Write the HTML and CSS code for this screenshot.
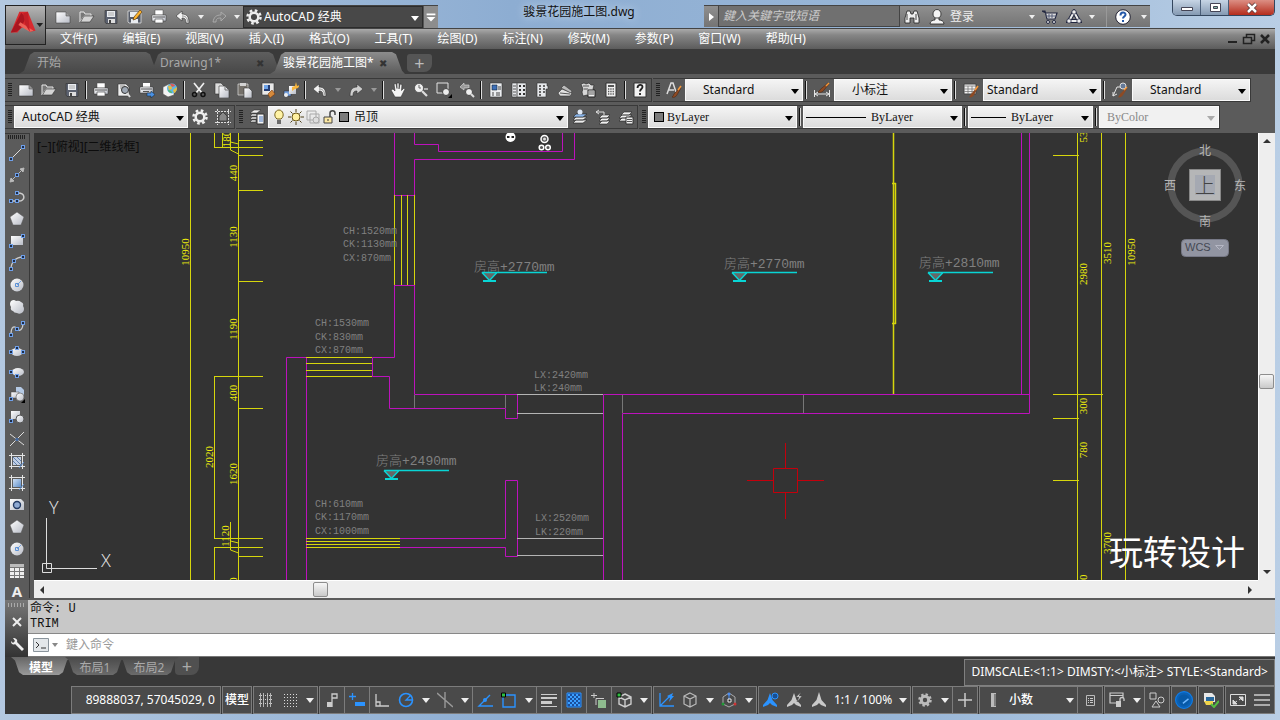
FILE: index.html
```html
<!DOCTYPE html>
<html lang="zh-CN">
<head>
<meta charset="utf-8">
<title>骏景花园施工图.dwg</title>
<link rel="stylesheet" href="styles.css">
</head>
<body>
<svg class="defs" aria-hidden="true">
  <defs>
    <linearGradient id="gw" x1="0" y1="0" x2="1" y2="1"><stop offset="0" stop-color="#fff"/><stop offset="1" stop-color="#b8bcc6"/></linearGradient>
    <linearGradient id="gb" x1="0" y1="0" x2="1" y2="1"><stop offset="0" stop-color="#cfe0f5"/><stop offset="1" stop-color="#5f8fcb"/></linearGradient>
    <g id="n"><rect x="-1.5" y="-1.5" width="3" height="3" fill="#1c2c48" stroke="#6f9fe8"/></g>
  </defs>
  <symbol id="new" viewBox="0 0 16 16"><path d="M1 3h10l4 4v7H1z" fill="url(#gw)" stroke="#333" stroke-width=".5"/><path d="M11 3v4h4" fill="#999" stroke="#555" stroke-width=".6"/></symbol>
  <symbol id="open" viewBox="0 0 16 16"><path d="M1 13V3h4l1 2h6v2H5z" fill="#777" stroke="#e8e8e8"/><path d="M1.500 13 5 7h10l-4 6z" fill="#d4d4d4" stroke="#333" stroke-width=".6"/></symbol>
  <symbol id="save" viewBox="0 0 16 16"><path d="M2 1.500h12v13H3L2 13z" fill="#5c6270" stroke="#333" stroke-width=".6"/><path d="M4 2h8v6H4z" fill="#e9ecf0"/><path d="M5 4h6M5 6h6" stroke="#aaa"/><path d="M5 10h7v4H5z" fill="#ddd"/><path d="M6 11h2v3H6z" fill="#444"/></symbol>
  <symbol id="saveas" viewBox="0 0 16 16"><path d="M1 2h13v12H2L1 13z" fill="#555b68" stroke="#eee" stroke-width=".7"/><path d="M3 3h8v5H3zM4 10h7v4H4z" fill="#e9ecf0"/><path d="m6 11 1-3 6-7 2 2-6 7z" fill="#ffb52e" stroke="#5d3c10" stroke-width=".7"/></symbol>
  <symbol id="print" viewBox="0 0 16 16"><path d="M4 1h8v5H4z" fill="#fff" stroke="#444" stroke-width=".5"/><path d="M1 6h14v6H1z" fill="url(#gw)" stroke="#333" stroke-width=".5"/><path d="M2 8h12" stroke="#555"/><path d="M4 10h8v4H4z" fill="#fff" stroke="#555" stroke-width=".7"/></symbol>
  <symbol id="preview" viewBox="0 0 16 16"><path d="M2 2h8l3 3v9H2z" fill="#eee" stroke="#333" stroke-width=".6"/><path d="M4 4h5M4 6h3" stroke="#888"/><circle cx="9" cy="8" r="3.500" fill="#9da6b2" stroke="#333"/><path d="m11 11 3 4" stroke="#ddd" stroke-width="2"/></symbol>
  <symbol id="publish" viewBox="0 0 16 16"><path d="M4 1h7v4H4z" fill="#fff"/><path d="M1 5h13v6H1z" fill="url(#gw)" stroke="#333" stroke-width=".5"/><path d="M2 7h11M4 9.500h6" stroke="#555"/><path d="M8 11h4V9l4 3.500-4 3.500v-2H8z" fill="#4a90e2" stroke="#123" stroke-width=".5"/></symbol>
  <symbol id="globe" viewBox="0 0 16 16"><path d="m1 5 6-3 5 3v8l-6 2-5-3z" fill="#f3f3f3" stroke="#555" stroke-width=".6"/><circle cx="10" cy="6.500" r="5" fill="#5db6e7"/><path d="M6 4c3-1 4 0 4 3l-3 1zM11 8l4-3c0 4-2 6-3 6z" fill="#e8bc3d"/><path d="M8 2c3-1 5 1 5 2l-3 1z" fill="#dd5b57"/><path d="M6 8c2 0 4 1 4 3-2 0-4-1-4-3z" fill="#57b86a"/></symbol>
  <symbol id="cut" viewBox="0 0 16 16"><path d="m3 1 8 10M13 1 5 11" stroke="#eee" stroke-width="1.700"/><circle cx="3.500" cy="12.500" r="2" fill="none" stroke="#111" stroke-width="1.500"/><circle cx="12" cy="12.500" r="2" fill="none" stroke="#111" stroke-width="1.500"/></symbol>
  <symbol id="copy" viewBox="0 0 16 16"><path d="M1 1h6l3 3v8H1z" fill="#ddd" stroke="#333" stroke-width=".6"/><path d="M5 4h6l4 4v8H5z" fill="url(#gw)" stroke="#333" stroke-width=".6"/><path d="M11 4v4h4" fill="none" stroke="#777"/></symbol>
  <symbol id="paste" viewBox="0 0 16 16"><path d="M1 2h10v11H1z" fill="#74706a" stroke="#ddd" stroke-width=".7"/><path d="M3 1h6v3H3z" fill="#d3d3d3"/><path d="M7 6h5l3 3v7H7z" fill="url(#gw)" stroke="#333" stroke-width=".6"/></symbol>
  <symbol id="match" viewBox="0 0 16 16"><path d="M2 1h12v12H2z" fill="#e9e9e9" stroke="#333" stroke-width=".6"/><path d="M4 3h6v6H4z" fill="#253d73"/><path d="M4 3h4v4H4z" fill="#6ea3e8"/><path d="m8 12 4-4 3 4-5 4z" fill="#d58a3c" stroke="#7b3b11" stroke-width=".6"/></symbol>
  <symbol id="block" viewBox="0 0 16 16"><path d="M1 9h7v5H1z" fill="#76a1dd" stroke="#223" stroke-width=".5"/><path d="M6 4h7v8H6z" fill="url(#gw)"/><circle cx="3" cy="13" r="2" fill="#eee"/><path d="m9 5 3-1 1-4 1 4 3-1-2 3-3 1-3 2z" fill="#f7b53c"/></symbol>
  <symbol id="undo" viewBox="0 0 16 16"><path d="M1 7 7 2v3c5 0 7 3 7 9h-3c0-4-1-5-4-5v3z" fill="#f2f2f2" stroke="#333" stroke-width=".6"/><path d="M7 7c4 0 5 2 6 6" fill="none" stroke="#888"/></symbol>
  <symbol id="redo" viewBox="0 0 16 16"><path d="M15 7 9 2v3C4 5 2 8 2 14h3c0-4 1-5 4-5v3z" fill="#cfcfcf" stroke="#333" stroke-width=".6"/></symbol>
  <symbol id="redo-off" viewBox="0 0 16 16"><path d="M15 7 10 3v3C5 6 3 8 2 13h3c0-3 1-4 5-4v3z" fill="none" stroke="#aaa"/></symbol>
  <symbol id="hand" viewBox="0 0 16 16"><path d="M5 15 1 8l2-1 2 2-1-7 2-.500 1 5V1h2v6l1-5 2 .500-.500 6L14 6l1 1-4 8z" fill="#f4f4f4" stroke="#333" stroke-width=".6"/></symbol>
  <symbol id="zoomrt" viewBox="0 0 16 16"><circle cx="6" cy="6" r="4.500" fill="#f0f0f0" stroke="#333" stroke-width=".6"/><path d="M6 3v3h2" stroke="#666" fill="none"/><path d="m9 9 5 5" stroke="#ddd" stroke-width="2.200"/><path d="M11 7h4" stroke="#fff"/></symbol>
  <symbol id="zoomwin" viewBox="0 0 16 16"><path d="M1 1h11v10H1z" fill="none" stroke="#e4e4e4"/><circle cx="10" cy="10" r="3.500" fill="#eee" stroke="#444"/><path d="M16 12v4h-4z" fill="#000"/></symbol>
  <symbol id="zoomprev" viewBox="0 0 16 16"><path d="m1 5 4-4v2h5v3H5v2z" fill="#999" stroke="#ddd" stroke-width=".6"/><circle cx="10" cy="10" r="3.500" fill="#f0f0f0" stroke="#444"/><path d="m12 12 3 3" stroke="#ddd" stroke-width="2"/></symbol>
  <symbol id="props" viewBox="0 0 16 16"><path d="M2 1h12v14H2z" fill="#eceef1" stroke="#333" stroke-width=".6"/><path d="M4 3h5v5H4z" fill="#3d6fb8" stroke="#123" stroke-width=".6"/><path d="M10 5h3M10 7h3M4 11h2M8 11h4M4 13h2M8 13h4" stroke="#444"/></symbol>
  <symbol id="dcenter" viewBox="0 0 16 16"><path d="M1 1h14v14H1z" fill="#e6e8eb" stroke="#333" stroke-width=".6"/><path d="M2 4h3M2 7h3M2 10h3M2 13h3M6 1v14" stroke="#555"/><path d="M8 3h2v2H8zM12 3h2v2h-2zM8 7h2v2H8zM12 7h2v2h-2zM8 11h2v2H8zM12 11h2v2h-2z" fill="#333"/></symbol>
  <symbol id="palette" viewBox="0 0 16 16"><path d="M3 1h10v3h1v3h-2v8H3z" fill="#e6e8eb" stroke="#333" stroke-width=".6"/><path d="M5 3h2v2H5zM5 6h2v2H5zM5 9h2v2H5zM5 12h2v2H5zM9 3h2v2H9zM9 6h2v2H9zM9 9h2v2H9z" fill="#666"/></symbol>
  <symbol id="sheet" viewBox="0 0 16 16"><path d="m1 11 4-4 10 4-2 3H3z" fill="#e1e1e1" stroke="#333" stroke-width=".6"/><path d="m4 6 3-3 8 6-1 2z" fill="#bbb" stroke="#333" stroke-width=".6"/><path d="m3 11 10 1" stroke="#555"/></symbol>
  <symbol id="markup" viewBox="0 0 16 16"><path d="M1 2 4 1l2 1 3-1 2 2 3 0-1 4 1 4-4 3-3-1-4 1-1-4 1-3z" fill="#d7d7d7" stroke="#222" stroke-width=".6"/><path d="M3 4h6M4 7h4" stroke="#555"/><path d="M8 8h7v7H8z" fill="#f2f2f2" stroke="#222"/><path d="M9 10h5M9 12h5" stroke="#555"/></symbol>
  <symbol id="calc" viewBox="0 0 16 16"><path d="M3 1h10v14H3z" fill="#f0f0f0" stroke="#333"/><path d="M5 3h6v2H5z" fill="#555"/><path d="M5 7h6M5 9.500h6M5 12h6" stroke="#555" stroke-width="1.500" stroke-dasharray="1.300 1"/></symbol>
  <symbol id="help" viewBox="0 0 16 16"><path d="M2 1h12v14H2z" fill="#f3f3f3" stroke="#333"/><path d="M5.500 6c0-4 5-4 5-1 0 2-2.500 2-2.500 4.500M8 11v2" fill="none" stroke="#222" stroke-width="1.800"/></symbol>
  <symbol id="tstyle" viewBox="0 0 16 16"><path d="m1 12 4-11h2l3 9M3 8h5" fill="none" stroke="#ddd" stroke-width="1.500"/><path d="m9 11 5-6 1 1-4 7c-1 2-4 3-5 2 2-1 1-3 3-4z" fill="#8d4a24" stroke="#44220f" stroke-width=".5"/><path d="m12 8 3-4" stroke="#f49a3c" stroke-width="1.500"/></symbol>
  <symbol id="dstyle" viewBox="0 0 16 16"><path d="M.500 8v7M15.500 8v7M1 12h14M1 12l3-2M1 12l3 2M15 12l-3-2M15 12l-3 2" fill="none" stroke="#e4e4e4"/><path d="m8 6 6-5 1 1-5 6c-1 2-4 3-6 2 2-1 2-3 4-4z" fill="#8d4a24" stroke="#44220f" stroke-width=".5"/><path d="m12 4 3-3" stroke="#f49a3c" stroke-width="1.500"/></symbol>
  <symbol id="tabstyle" viewBox="0 0 16 16"><path d="M1 2h12v10H1z" fill="#f4f4f4" stroke="#444"/><path d="M1 4h12M1 7h12M1 9.500h12M5 4v8M9 4v8" stroke="#777" stroke-width=".8"/><path d="m9 11 5-6 1 1-4 7c-1 2-4 3-5 2 2-1 1-3 3-4z" fill="#8d4a24"/><path d="m12 8 3-4" stroke="#f49a3c" stroke-width="1.500"/></symbol>
  <symbol id="mlstyle" viewBox="0 0 16 16"><path d="M1 14 5 5h4M1 14v-4M1 14l4-2" fill="none" stroke="#e4e4e4"/><circle cx="11" cy="4" r="3" fill="#657a98" stroke="#ddd"/><path d="m9 11 5-5 1 1-4 6c-1 2-4 3-5 2 2-1 1-3 3-4z" fill="#8d4a24"/><path d="m12 8 3-3" stroke="#f49a3c" stroke-width="1.500"/></symbol>
  <symbol id="gear" viewBox="0 0 16 16"><circle cx="8" cy="8" r="6.500" fill="none" stroke="#eee" stroke-width="2.500" stroke-dasharray="2.600 2.500"/><circle cx="8" cy="8" r="4.300" fill="none" stroke="#eee" stroke-width="2.500"/></symbol>
  <symbol id="wspace" viewBox="0 0 16 16"><path d="M2.500 0v16M13.500 0v16M0 2.500h16M0 13.500h16" stroke="#ddd" stroke-dasharray="2 1"/><path d="M4 12V7l4-4 4 4v5z" fill="#888" stroke="#222" stroke-width=".6"/></symbol>
  <symbol id="laymgr" viewBox="0 0 16 16"><path d="m1 4 4-3h7L8 4zM1 7l2-2h5v2zM1 10l2-2h5v2zM1 13l2-2h4v2z" fill="#eee" stroke="#222" stroke-width=".5"/><path d="M8 5h7v10H8z" fill="#f5f5f5" stroke="#333"/><path d="M10 8h4M10 10h4M10 12h4" stroke="#4a74b8"/></symbol>
  <symbol id="lay1" viewBox="0 0 16 16"><path d="m1 14 3-3h11l-4 3zM1 11l3-3h11l-4 3z" fill="#eee" stroke="#222" stroke-width=".6"/><path d="m1 8 3-3h11l-4 3z" fill="#8bb6ea" stroke="#222" stroke-width=".6"/><circle cx="8" cy="3" r="2.500" fill="#dfe8f5"/></symbol>
  <symbol id="lay2" viewBox="0 0 16 16"><path d="m4 15 3-3h8l-3 3zM4 12l3-3h8l-3 3zM4 9l3-3h8l-3 3z" fill="#f0f0f0" stroke="#222" stroke-width=".6"/><path d="M1 3h8v3M1 3l3-2M1 3l3 2" fill="none" stroke="#ddd"/></symbol>
  <symbol id="lay3" viewBox="0 0 16 16"><path d="m1 12 3-3h10l-4 3zM1 9l3-3h10l-4 3zM3 6l3-3h8l-3 3z" fill="#f0f0f0" stroke="#222" stroke-width=".6"/><path d="M8 8h7v7H8z" fill="#eee" stroke="#333"/><path d="M9 10.500h5M9 12.500h5" stroke="#555"/></symbol>
  <symbol id="bulb" viewBox="0 0 16 16"><path d="M6 10C2 7 4 1 8 1s6 6 2 9z" fill="#fff3a6" stroke="#77621b"/><path d="M6 12h4M6 14h4" stroke="#444" stroke-width="1.500"/></symbol>
  <symbol id="sun" viewBox="0 0 16 16"><circle cx="8" cy="8" r="4" fill="#fff0a0" stroke="#6a5514"/><path d="M8 0v3M8 13v3M0 8h3M13 8h3M2.500 2.500l2 2M11.500 11.500l2 2M13.500 2.500l-2 2M4.500 11.500l-2 2" stroke="#4c3f18"/></symbol>
  <symbol id="vpf" viewBox="0 0 16 16"><path d="M2 2h9v9H2zM5 5h9v9H5z" fill="none" stroke="#aaa"/><circle cx="11" cy="11" r="3" fill="#ddd" stroke="#aaa"/></symbol>
  <symbol id="lock" viewBox="0 0 16 16"><path d="M8 8V4c0-3 5-3 5 0v2" fill="none" stroke="#444" stroke-width="1.500"/><path d="M2 8h8v6H2z" fill="#fce8a4" stroke="#444"/><path d="M6 10v2" stroke="#333"/></symbol>

  <symbol id="line" viewBox="0 0 16 16"><path d="M2 14 14 2" stroke="#ddd"/><use href="#n" x="2" y="14"/><use href="#n" x="14" y="2"/></symbol>
  <symbol id="xline" viewBox="0 0 16 16"><path d="M3 13 13 3M15 1l-1 4-3-3zM1 15l1-4 3 3z" stroke="#bbb" fill="#bbb"/><use href="#n" x="8" y="8"/></symbol>
  <symbol id="pline" viewBox="0 0 16 16"><path d="M8 4c9-1 9 9 1 8H2" fill="none" stroke="#ccc" stroke-width="1.500"/><use href="#n" x="8" y="4"/><use href="#n" x="8" y="12"/><use href="#n" x="2" y="12"/></symbol>
  <symbol id="poly" viewBox="0 0 16 16"><path d="m8 1 7 5-3 8H4L1 6z" fill="url(#gw)" stroke="#555" stroke-width=".5"/></symbol>
  <symbol id="rect" viewBox="0 0 16 16"><path d="M2 3h12v9H2z" fill="url(#gw)"/><use href="#n" x="2" y="13"/><use href="#n" x="14" y="3"/></symbol>
  <symbol id="arc" viewBox="0 0 16 16"><path d="M2 14C2 7 7 2 14 2" fill="none" stroke="#ccc" stroke-width="1.300"/><use href="#n" x="2" y="14"/><use href="#n" x="5" y="6"/><use href="#n" x="14" y="2"/></symbol>
  <symbol id="circ" viewBox="0 0 16 16"><circle cx="8" cy="8" r="6.500" fill="url(#gw)"/><path d="m8 8 4-4" stroke="#79a3de"/><path d="M6.500 6.500h3v3h-3z" fill="none" stroke="#5e92d5"/></symbol>
  <symbol id="cloud" viewBox="0 0 16 16"><path d="M2 2q3-2 5 0 3-1 5 1 3 1 2 4 2 3 0 6-3 3-6 1-3 0-4-2-3-1-2-4-2-3 0-6z" fill="url(#gw)"/></symbol>
  <symbol id="spline" viewBox="0 0 16 16"><path d="M2 14C2 4 6 5 8 8s6 1 6-6" fill="none" stroke="#ccc" stroke-width="1.300"/><use href="#n" x="2" y="14"/><use href="#n" x="8" y="8"/><use href="#n" x="14" y="2"/></symbol>
  <symbol id="ell" viewBox="0 0 16 16"><ellipse cx="8" cy="9" rx="6" ry="4" fill="url(#gw)"/><use href="#n" x="2" y="9"/><use href="#n" x="8" y="5"/><use href="#n" x="14" y="9"/></symbol>
  <symbol id="ellarc" viewBox="0 0 16 16"><ellipse cx="9" cy="7" rx="6" ry="4" fill="url(#gw)"/><use href="#n" x="2" y="7"/><use href="#n" x="8" y="11"/></symbol>
  <symbol id="insblk" viewBox="0 0 16 16"><path d="M7 0h5l3 3v6H7z" fill="#b5cae5"/><path d="M2 5h8v6H2z" fill="url(#gw)" stroke="#444" stroke-width=".5"/><circle cx="11" cy="10" r="4" fill="url(#gw)" stroke="#555" stroke-width=".6"/><use href="#n" x="2" y="12"/><path d="M16 12v4h-4z" fill="#000"/></symbol>
  <symbol id="mkblk" viewBox="0 0 16 16"><path d="M2 2h9v8H2z" fill="url(#gw)"/><circle cx="11" cy="10" r="4" fill="url(#gw)" stroke="#555"/><use href="#n" x="2" y="12"/></symbol>
  <symbol id="point" viewBox="0 0 16 16"><path d="M1 15 15 1M1 3l14 11" stroke="#ddd"/><path d="M6.500 7h3v3h-3z" fill="#46699c"/></symbol>
  <symbol id="hatch" viewBox="0 0 16 16"><path d="M2.500 0v16M13.500 0v16M0 2.500h16M0 13.500h16" stroke="#e4e4e4"/><path d="M4 4h8v8H4z" fill="#c0cee3"/><path d="m4 4 8 8M8 4l4 4M4 8l4 4" stroke="#607fae"/><path d="M10 15 15 9" stroke="#5e92d5"/></symbol>
  <symbol id="grad" viewBox="0 0 16 16"><path d="M2.500 0v16M13.500 0v16M0 2.500h16M0 13.500h16" stroke="#e4e4e4"/><path d="M4 4h8v8H4z" fill="url(#gb)"/><path d="M10 15 15 9" stroke="#5e92d5"/></symbol>
  <symbol id="region" viewBox="0 0 16 16"><path d="M1 2h11l3 3v8H1z" fill="url(#gw)"/><circle cx="8" cy="8" r="3.500" fill="#8faad3" stroke="#243b63" stroke-width="1.400"/></symbol>
  <symbol id="table" viewBox="0 0 16 16"><path d="M1 1h14v14H1z" fill="#eee"/><path d="M1 4.500h14M1 8.500h14M1 12.500h14M5.500 4v11M10.500 4v11" stroke="#777"/><path d="M1 1h14v3H1z" fill="#bbb"/></symbol>

  <symbol id="bino" viewBox="0 0 16 16"><path d="m1 9 2-7h3l1 3h2l1-3h3l2 7v5h-5V9H6v5H1z" fill="#eee" stroke="#222" stroke-width=".8"/><path d="M3 5v6M12 5v6" stroke="#444"/></symbol>
  <symbol id="person" viewBox="0 0 16 16"><ellipse cx="8" cy="5" rx="4" ry="4.500" fill="#f4f4f4" stroke="#222" stroke-width=".8"/><path d="M1 15c0-3 3-4 5-4V9h4v2c2 0 5 1 5 4z" fill="#f4f4f4" stroke="#222" stroke-width=".8"/></symbol>
  <symbol id="cart" viewBox="0 0 16 16"><path d="M0 2h3l2 8h8l2-6H4z" fill="#ddd" stroke="#222740" stroke-width="1.200"/><path d="M7 5v4M10 5v4M4 7h10" stroke="#555c78"/><circle cx="6" cy="13" r="1.500" fill="#eee" stroke="#222740"/><circle cx="12" cy="13" r="1.500" fill="#eee" stroke="#222740"/></symbol>
  <symbol id="a360" viewBox="0 0 16 16"><g stroke="#222740" stroke-width="4" fill="#222740"><path d="M8 3 3 12h10z" fill="none"/></g><path d="M8 3 3 12h10z" fill="none" stroke="#eee" stroke-width="2"/><g fill="#eee" stroke="#222740" stroke-width=".8"><circle cx="8" cy="3" r="2.200"/><circle cx="3" cy="12" r="2.200"/><circle cx="13" cy="12" r="2.200"/></g></symbol>
  <symbol id="q" viewBox="0 0 16 16"><circle cx="8" cy="8" r="7.300" fill="#fff" stroke="#223" /><path d="M5.500 6.500c0-4 5-3.500 5-1 0 2-2.500 2-2.500 4M8 11v2" fill="none" stroke="#2458a8" stroke-width="2"/></symbol>
  <symbol id="wrench" viewBox="0 0 16 16"><path d="M2 4c0 4 3 4 4 3l7 7 2-2-7-7c1-2-1-4-4-4l2 3-2 2z" fill="#eee"/></symbol>

  <symbol id="s-grid" viewBox="0 0 16 16"><path d="M2.500 1v14M5.500 1v14M9.500 1v14M12.500 1v14" stroke="#b5b5b5"/><path d="M1 3.500h14M1 7.500h14M1 11.500h14" stroke="#ccc" stroke-dasharray="1 1"/></symbol>
  <symbol id="s-dots" viewBox="0 0 16 16"><path d="M2 2.500h13M2 5.500h13M2 8.500h13M2 11.500h13M2 14.500h13" stroke="#ddd" stroke-dasharray="1 2"/></symbol>
  <symbol id="s-infer" viewBox="0 0 16 16"><path d="M8 15V2h5v4H8" fill="none" stroke="#ccc" stroke-width="1.300"/><path d="M3 10h5v5H3z" fill="#ccc"/></symbol>
  <symbol id="s-dyn" viewBox="0 0 16 16"><path d="M3.500 1v7M0 4.500h7" stroke="#2b93ff" stroke-width="1.300"/><path d="M6 10h10v4H6z" fill="#2b93ff"/></symbol>
  <symbol id="s-ortho" viewBox="0 0 16 16"><path d="M2 2v12h13M2 10h4v4" fill="none" stroke="#ccc" stroke-width="1.300"/></symbol>
  <symbol id="s-polar" viewBox="0 0 16 16"><circle cx="8" cy="8" r="6.500" fill="none" stroke="#2b93ff" stroke-width="1.600"/><path d="M15 8H8l5-5" fill="none" stroke="#2b93ff" stroke-width="1.300"/></symbol>
  <symbol id="s-iso" viewBox="0 0 16 16"><path d="M0 1l16 14M8 0v16" stroke="#999" stroke-width="1.400"/></symbol>
  <symbol id="s-track" viewBox="0 0 16 16"><path d="M13 3 2 14h14" fill="none" stroke="#2b93ff" stroke-width="1.400"/><circle cx="8" cy="8" r="2" fill="#2b93ff"/></symbol>
  <symbol id="s-snap" viewBox="0 0 16 16"><path d="M2 3h12v12H2z" fill="none" stroke="#2b93ff" stroke-width="1.400"/><path d="M.500 1h4v4h-4z" fill="#2fbf40" stroke="#000"/></symbol>
  <symbol id="s-lw" viewBox="0 0 16 16"><path d="M0 2.500h16" stroke="#ccc"/><path d="M0 6h16" stroke="#ccc" stroke-width="2"/><path d="M0 10.500h11" stroke="#ccc" stroke-width="3"/><path d="M0 14.500h16" stroke="#ccc"/></symbol>
  <symbol id="s-tr" viewBox="0 0 16 16"><path d="M1 1h14v14H1z" fill="#1b4f9c" stroke="#2b93ff"/><path d="M2 3h12M2 7h12M2 11h12" stroke="#3ba0ff" stroke-width="2" stroke-dasharray="2 2"/><path d="M4 5h10M4 9h10M4 13h10" stroke="#3ba0ff" stroke-width="2" stroke-dasharray="2 2"/></symbol>
  <symbol id="s-cyc" viewBox="0 0 16 16"><path d="M3 1v5M0 3.500h6M5 13V6.500h8" stroke="#ccc" fill="none"/><path d="M7 8h8v8H7z" fill="#8fbc8f"/></symbol>
  <symbol id="s-cube" viewBox="0 0 16 16"><path d="m8 1 6 3v8l-6 3-6-3V4zM2 4l6 3 6-3M8 7v8" fill="none" stroke="#bbb" stroke-width="1.200"/></symbol>
  <symbol id="s-cubeg" viewBox="0 0 16 16"><path d="m9 2 6 3v7l-6 3-6-3V5zM3 5l6 3 6-3M9 8v7" fill="none" stroke="#ccc" stroke-width="1.400"/><path d="M1 1h4v4H1z" fill="#2fbf40" stroke="#000"/></symbol>
  <symbol id="s-ucs" viewBox="0 0 16 16"><path d="M2 1v13h14M2 14 12 4" fill="none" stroke="#2b93ff" stroke-width="1.300"/><path d="m9 4 6-3-1 3h2l-5 6 1-4z" fill="#2b93ff"/></symbol>
  <symbol id="s-giz" viewBox="0 0 16 16"><path d="m8 1 6 4v7l-6 3-6-3V5z" fill="none" stroke="#aaa"/><path d="M8 2v6" stroke="#4b8df0"/><circle cx="8" cy="2" r="1.500" fill="#4b8df0"/><circle cx="2" cy="12" r="1.500" fill="#1f9a35"/><circle cx="14" cy="12" r="1.500" fill="#cf3434"/><path d="M7 7h3v3H7z" fill="#222" stroke="#eee"/></symbol>
  <symbol id="s-ann" viewBox="0 0 16 16"><path d="M8 0l2.500 8 4.500 5v2l-5-2-2-2-2 2-5 2v-2l4.500-5z" fill="#c9c9c9"/></symbol>
  <symbol id="s-annb" viewBox="0 0 16 16"><path d="M7 1l2.500 7 4.500 5v2l-5-2-2-2-2 2-5 2v-2l4.500-5z" fill="#2b93ff"/><circle cx="12" cy="4" r="3" fill="#174f93" stroke="#2b93ff"/></symbol>
  <symbol id="s-anna" viewBox="0 0 16 16"><path d="M7 1l2.500 7 4.500 5v2l-5-2-2-2-2 2-5 2v-2l4.500-5z" fill="#c9c9c9"/><path d="m14 0-5 5h3l-2 5 5-6h-3z" fill="#ddd" stroke="#444" stroke-width=".5"/></symbol>
  <symbol id="s-gear" viewBox="0 0 16 16"><circle cx="8" cy="8" r="5.500" fill="none" stroke="#bbb" stroke-width="2.500" stroke-dasharray="2.300 2"/><circle cx="8" cy="8" r="3.700" fill="none" stroke="#bbb" stroke-width="3"/></symbol>
  <symbol id="s-plus" viewBox="0 0 16 16"><path d="M8 1v14M1 8h14" stroke="#ccc" stroke-width="1.500"/></symbol>
  <symbol id="s-unit" viewBox="0 0 16 16"><path d="M6 1h5v14H6z" fill="#bbb"/><path d="M9 3h2M9 5h2M9 7h2M9 9h2M9 11h2M9 13h2" stroke="#444"/></symbol>
  <symbol id="s-qp" viewBox="0 0 16 16"><path d="M4.500 3.500h8v10h-8z" fill="none" stroke="#bbb"/><path d="M6 6.500h1M8 6.500h3M6 8.500h1M8 8.500h3M6 10.500h1M8 10.500h3" stroke="#ccc"/></symbol>
  <symbol id="s-lock" viewBox="0 0 16 16"><path d="M7 11H1V1h13v4M1 3.500h13" fill="none" stroke="#ccc" stroke-width="1.200"/><path d="M7 9h5v6H7z" fill="#ccc"/><path d="M11 9V7c0-2 4-2 4 0v2" fill="none" stroke="#ccc" stroke-width="1.300"/></symbol>
  <symbol id="s-isol" viewBox="0 0 16 16"><path d="M1 1h6v6H1zM7 9l4 6H3z" fill="none" stroke="#ccc"/><circle cx="12" cy="8" r="3" fill="none" stroke="#ccc"/></symbol>
  <symbol id="s-hw" viewBox="0 0 16 16"><circle cx="8" cy="8" r="7.500" fill="#0b61b5" stroke="#0f7de8"/><circle cx="8" cy="8" r="5" fill="#0759a7"/><path d="m7 11 5-4" stroke="#6fb8ff" stroke-width="1.300"/></symbol>
  <symbol id="s-py" viewBox="0 0 16 16"><path d="M1 1h8l3 3v6H1z" fill="#e7e7e7"/><path d="M3 5h8v4H3z" fill="#28689d"/><path d="M1 9h9v4H3z" fill="#efd34b"/><path d="m8 12 3 3 5-6" fill="none" stroke="#54bd42" stroke-width="2"/></symbol>
  <symbol id="s-full" viewBox="0 0 16 16"><path d="M.500 2.500h15v11H.500z" fill="none" stroke="#ddd"/><path d="M9 5h4v4zM3 8v4h4zM13 5 9 8M3 12l4-3" fill="#ddd" stroke="#ddd"/></symbol>
  <symbol id="s-menu" viewBox="0 0 16 16"><path d="M0 3h16M0 8h16M0 13h16" stroke="#ccc" stroke-width="1.500"/></symbol>
</svg>

<div class="window">
  <header class="titlebar">
    <button class="logo" aria-label="应用程序菜单">
      <svg viewBox="0 0 40 40"><path d="m4 28 9-22h9l8 20-6 1-3-7-7 4-3 4z" fill="#d92a2e"/><path d="m4 28 11-21 5 5-6 12-4 3z" fill="#a91620"/><path d="m14 17 14 9-4 1-12-7z" fill="#ee6258"/><path d="m17 8 5-2 2 21-5-8z" fill="#c22027"/><path d="M31 18h7l-3.500 4z" fill="#222"/></svg>
    </button>
    <div class="quick">
      <button class="q-btn" aria-label="新建"><svg><use href="#new"/></svg></button>
      <button class="q-btn" aria-label="打开"><svg><use href="#open"/></svg></button>
      <button class="q-btn" aria-label="保存"><svg><use href="#save"/></svg></button>
      <button class="q-btn" aria-label="另存为"><svg><use href="#saveas"/></svg></button>
      <button class="q-btn" aria-label="打印"><svg><use href="#print"/></svg></button>
      <button class="q-btn" aria-label="放弃"><svg><use href="#undo"/></svg></button>
      <button class="drop" aria-label="放弃列表"></button>
      <button class="q-btn" aria-label="重做"><svg><use href="#redo-off"/></svg></button>
      <button class="drop" aria-label="重做列表"></button>
      <div class="combo combo-dark"><span class="over"><svg class="ic"><use href="#gear"/></svg></span><select aria-label="工作空间"><option>AutoCAD 经典</option></select></div>
      <button class="custom" aria-label="自定义快速访问工具栏"><svg viewBox="0 0 16 16"><path d="M3 4h10v2H3zM3 8h10l-5 5z" fill="#fff"/></svg></button>
    </div>
    <h1 class="title">骏景花园施工图.dwg</h1>
    <div class="info">
      <button class="expand" aria-label="展开"></button>
      <input class="search" type="text" aria-label="搜索" placeholder="鍵入关鍵字或短语">
      <button class="q-btn" aria-label="查找"><svg><use href="#bino"/></svg></button>
      <button class="login"><svg><use href="#person"/></svg>登录</button>
      <button class="drop" aria-label="登录选项"></button>
      <button class="q-btn" aria-label="商店"><svg><use href="#cart"/></svg></button>
      <button class="q-btn" aria-label="A360"><svg><use href="#a360"/></svg></button>
      <button class="drop" aria-label="A360 选项"></button>
      <button class="q-btn help" aria-label="帮助"><svg><use href="#q"/></svg></button>
      <button class="drop" aria-label="帮助选项"></button>
    </div>
    <div class="winbtns">
      <button aria-label="最小化"><svg viewBox="0 0 16 12"><path d="M2.500 5.500h11v3h-11z" fill="#fff" stroke="#445"/></svg></button>
      <button aria-label="最大化"><svg viewBox="0 0 16 12"><path d="M3.500 1.500h10v8h-10z" fill="#fff" stroke="#445"/><path d="M6.500 4.500h4v2h-4z" fill="#8ba" stroke="#445"/></svg></button>
      <button class="close" aria-label="关闭"><svg viewBox="0 0 16 12"><path d="m4 2 8 8M12 2l-8 8" stroke="#533" stroke-width="4"/><path d="m4 2 8 8M12 2l-8 8" stroke="#fff" stroke-width="2.500"/></svg></button>
    </div>
  </header>

  <nav class="menubar">
    <button>文件(F)</button><button>编辑(E)</button><button>视图(V)</button><button>插入(I)</button><button>格式(O)</button><button>工具(T)</button><button>绘图(D)</button><button>标注(N)</button><button>修改(M)</button><button>参数(P)</button><button>窗口(W)</button><button>帮助(H)</button>
    <span class="docbtns">
      <button aria-label="最小化图形"><svg viewBox="0 0 14 14"><path d="M2 10h9" stroke="#222" stroke-width="2"/></svg></button>
      <button aria-label="还原图形"><svg viewBox="0 0 14 14"><path d="M1.500 5.500h8v6h-8zM4.500 5V2.500h8v6H10" fill="none" stroke="#222" stroke-width="1.500"/></svg></button>
      <button aria-label="关闭图形"><svg viewBox="0 0 14 14"><path d="m3 3 8 8M11 3l-8 8" stroke="#222" stroke-width="2.500"/></svg></button>
    </span>
  </nav>

  <nav class="filetabs">
    <div class="ftab"><button class="name">开始</button></div>
    <div class="ftab"><button class="name">Drawing1*</button><button class="x" aria-label="关闭 Drawing1">✖</button></div>
    <div class="ftab on"><button class="name">骏景花园施工图*</button><button class="x" aria-label="关闭 骏景花园施工图">✖</button></div>
    <button class="addtab" aria-label="新图形">+</button>
  </nav>

  <div class="bars">
    <div class="row">
      <div class="bar">
        <i class="grip"></i>
        <button aria-label="新建"><svg><use href="#new"/></svg></button><button aria-label="打开"><svg><use href="#open"/></svg></button><button aria-label="保存"><svg><use href="#save"/></svg></button>
        <i class="sep"></i>
        <button aria-label="打印"><svg><use href="#print"/></svg></button><button aria-label="打印预览"><svg><use href="#preview"/></svg></button><button aria-label="发布"><svg><use href="#publish"/></svg></button><button aria-label="三维打印"><svg><use href="#globe"/></svg></button>
        <i class="sep"></i>
        <button aria-label="剪切"><svg><use href="#cut"/></svg></button><button aria-label="复制"><svg><use href="#copy"/></svg></button><button aria-label="粘贴"><svg><use href="#paste"/></svg></button><button aria-label="特性匹配"><svg><use href="#match"/></svg></button><button aria-label="块编辑器"><svg><use href="#block"/></svg></button>
        <i class="sep"></i>
        <button aria-label="放弃"><svg><use href="#undo"/></svg></button><button class="drop dim" aria-label="放弃列表"></button><button aria-label="重做"><svg><use href="#redo"/></svg></button><button class="drop dim" aria-label="重做列表"></button>
        <i class="sep"></i>
        <button aria-label="平移"><svg><use href="#hand"/></svg></button><button aria-label="实时缩放"><svg><use href="#zoomrt"/></svg></button><button aria-label="窗口缩放"><svg><use href="#zoomwin"/></svg></button><button aria-label="缩放上一个"><svg><use href="#zoomprev"/></svg></button>
        <i class="sep"></i>
        <button aria-label="特性"><svg><use href="#props"/></svg></button><button aria-label="设计中心"><svg><use href="#dcenter"/></svg></button><button aria-label="工具选项板"><svg><use href="#palette"/></svg></button><button aria-label="图纸集"><svg><use href="#sheet"/></svg></button><button aria-label="标记集"><svg><use href="#markup"/></svg></button><button aria-label="计算器"><svg><use href="#calc"/></svg></button>
        <i class="sep"></i>
        <button aria-label="帮助"><svg><use href="#help"/></svg></button>
      </div>
      <div class="bar styles">
        <i class="grip"></i>
        <button aria-label="文字样式"><svg><use href="#tstyle"/></svg></button>
        <div class="combo c-style"><select aria-label="文字样式"><option>Standard</option></select></div>
        <i class="sep"></i>
        <button aria-label="标注样式"><svg><use href="#dstyle"/></svg></button>
        <div class="combo c-style"><select aria-label="标注样式"><option>小标注</option></select></div>
        <i class="sep"></i>
        <button aria-label="表格样式"><svg><use href="#tabstyle"/></svg></button>
        <div class="combo c-style flush"><select aria-label="表格样式"><option>Standard</option></select></div>
        <i class="sep"></i>
        <button aria-label="多重引线样式"><svg><use href="#mlstyle"/></svg></button>
        <div class="combo c-style"><select aria-label="多重引线样式"><option>Standard</option></select></div>
      </div>
    </div>
    <div class="row">
      <div class="bar">
        <i class="grip"></i>
        <div class="combo c-work"><select aria-label="工作空间"><option>AutoCAD 经典</option></select></div>
        <button aria-label="工作空间设置"><svg><use href="#gear"/></svg></button><button aria-label="我的工作空间"><svg><use href="#wspace"/></svg></button>
      </div>
      <div class="bar">
        <i class="grip"></i>
        <button aria-label="图层特性"><svg><use href="#laymgr"/></svg></button>
        <div class="combo c-layer"><span class="over"><svg><use href="#bulb"/></svg><svg><use href="#sun"/></svg><svg><use href="#vpf"/></svg><svg><use href="#lock"/></svg><b class="swatch"></b></span><select aria-label="图层"><option>吊顶</option></select></div>
        <button aria-label="置为当前"><svg><use href="#lay1"/></svg></button><button aria-label="上一个图层"><svg><use href="#lay2"/></svg></button><button aria-label="图层状态"><svg><use href="#lay3"/></svg></button>
      </div>
      <div class="bar">
        <i class="grip"></i>
        <div class="combo serif c-color"><span class="over"><b class="swatch"></b></span><select aria-label="颜色"><option>ByLayer</option></select></div>
        <i class="sep"></i>
        <div class="combo serif c-ltype"><span class="over"><b class="rule"></b></span><select aria-label="线型"><option>ByLayer</option></select></div>
        <i class="sep"></i>
        <div class="combo serif c-lw"><span class="over"><b class="rule"></b></span><select aria-label="线宽"><option>ByLayer</option></select></div>
        <i class="sep"></i>
        <div class="combo serif c-plot"><select aria-label="打印样式" disabled><option>ByColor</option></select></div>
      </div>
    </div>
  </div>

  <main class="work">
    <aside class="draw">
      <i class="hgrip"></i>
      <button aria-label="直线"><svg><use href="#line"/></svg></button>
      <button aria-label="构造线"><svg><use href="#xline"/></svg></button>
      <button aria-label="多段线"><svg><use href="#pline"/></svg></button>
      <button aria-label="多边形"><svg><use href="#poly"/></svg></button>
      <button aria-label="矩形"><svg><use href="#rect"/></svg></button>
      <button aria-label="圆弧"><svg><use href="#arc"/></svg></button>
      <button aria-label="圆"><svg><use href="#circ"/></svg></button>
      <button aria-label="修订云线"><svg><use href="#cloud"/></svg></button>
      <button aria-label="样条曲线"><svg><use href="#spline"/></svg></button>
      <button aria-label="椭圆"><svg><use href="#ell"/></svg></button>
      <button aria-label="椭圆弧"><svg><use href="#ellarc"/></svg></button>
      <button aria-label="插入块"><svg><use href="#insblk"/></svg></button>
      <button aria-label="创建块"><svg><use href="#mkblk"/></svg></button>
      <button aria-label="点"><svg><use href="#point"/></svg></button>
      <button aria-label="图案填充"><svg><use href="#hatch"/></svg></button>
      <button aria-label="渐变色"><svg><use href="#grad"/></svg></button>
      <button aria-label="面域"><svg><use href="#region"/></svg></button>
      <button aria-label="多边形"><svg><use href="#poly"/></svg></button>
      <button aria-label="圆"><svg><use href="#circ"/></svg></button>
      <button aria-label="表格"><svg><use href="#table"/></svg></button>
      <button class="mtext" aria-label="多行文字">A</button>
    </aside>
    <section class="view">
      <svg class="canvas" viewBox="34 133 1224 447" preserveAspectRatio="xMidYMid slice">
        <rect x="34" y="133" width="1224" height="447" fill="#333"/>
        <text x="37" y="151" class="vp">[−][俯视][二维线框]</text>
        <g class="yel">
          <path d="M190.500 133v447M238.500 133v447M214.500 133v14.500M230.500 133v17l8 4M222.500 133v14M230.500 142l8 2M239 140.500h24M214 147.500h49M238 155.500h25M238 190.500h25M238 281.500h25M214 376.500h49M238 408.500h25M214 538.500h49M214 547.500h49M238 556.500h25M214.500 376v162M214.500 548v32M230.500 522v28l8 3M230.500 541l8 2"/>
          <path d="M1077.500 133v447M1101.500 133v447M1125.500 133v447M1053 155.500h26M1053 394.500h50M1053 418.500h26M1053 480.500h26"/>
          <path d="M893.500 133v261M895.500 183v141M892 183.500h4M892 323.500h4" stroke-width="1.500"/>
        </g>
        <g class="dim">
          <text transform="translate(189 252) rotate(-90)">10950</text>
          <text transform="translate(230 139) rotate(-90)">180</text>
          <text transform="translate(237 173) rotate(-90)">440</text>
          <text transform="translate(237 237) rotate(-90)">1130</text>
          <text transform="translate(237 329) rotate(-90)">1190</text>
          <text transform="translate(237 393) rotate(-90)">400</text>
          <text transform="translate(213 457) rotate(-90)">2020</text>
          <text transform="translate(237 474) rotate(-90)">1620</text>
          <text transform="translate(229 536) rotate(-90)">1120</text>
          <text transform="translate(237 580) rotate(-90)">0</text>
          <text transform="translate(1087 137) rotate(-90)">53</text>
          <text transform="translate(1087 274) rotate(-90)">2980</text>
          <text transform="translate(1111 253) rotate(-90)">3510</text>
          <text transform="translate(1135 252) rotate(-90)">10950</text>
          <text transform="translate(1087 406) rotate(-90)">300</text>
          <text transform="translate(1087 450) rotate(-90)">780</text>
          <text transform="translate(1111 543) rotate(-90)">3700</text>
          <text transform="translate(1087 580) rotate(-90)">20</text>
        </g>
        <g class="mag">
          <path d="M394.500 133v62M414.500 195V159.500h160V133M414.500 133v11.500h24v7h124V133M394 195.500h21M394 285.500h21M394.500 285v72.500H372.500v19h17v32h116v10h12v-24H414.500V285"/>
          <path d="M306 357.500H286.500V580M306.500 357v223M603.500 580V394.500h426M1029.500 133v280.500H622.500V580M1021.500 133v261"/>
          <path d="M400 538.500h105.500v-58h12v76h-12v-9H400"/>
        </g>
        <g class="gray"><path d="M414.500 395v13M505.500 395v13M622.500 395v18M803.500 395v18"/></g>
        <g class="wht"><path d="M517 394.500h86M517 413.500h86M517 538.500h86M517 555.500h86"/></g>
        <g class="yel"><path d="M394.500 195v90M401.500 195v90M407.500 195v90M414.500 195v90M306 357.500h66M306 363.500h66M306 370.500h66M306 376.500h66M306 538.500h94M306 541.500h94M306 544.500h94M306 547.500h94"/></g>
        <circle cx="510.500" cy="137" r="5" fill="#fff"/><path d="M507 137h2.500M511.500 137h2.500" stroke="#222" stroke-width="2"/>
        <g fill="#555" stroke="#fff" stroke-width="1.500"><circle cx="544.500" cy="139" r="3.500"/><circle cx="541.500" cy="147.500" r="2.300"/><circle cx="548" cy="147.500" r="2.300"/></g><circle cx="544.500" cy="139" r="1.500" fill="#ddd"/>
        <g class="lab">
          <text x="343" y="234">CH:1520mm</text><text x="343" y="247">CK:1130mm</text><text x="343" y="261">CX:870mm</text>
          <text x="315" y="326">CH:1530mm</text><text x="315" y="340">CK:830mm</text><text x="315" y="353">CX:870mm</text>
          <text x="534" y="378">LX:2420mm</text><text x="534" y="391">LK:240mm</text>
          <text x="315" y="507">CH:610mm</text><text x="315" y="520">CK:1170mm</text><text x="315" y="534">CX:1000mm</text>
          <text x="535" y="521">LX:2520mm</text><text x="535" y="535">LK:220mm</text>
        </g>
        <g class="room">
          <text x="474" y="271">房高+2770mm</text><text x="724" y="268">房高+2770mm</text><text x="919" y="267">房高+2810mm</text><text x="376" y="465">房高+2490mm</text>
        </g>
        <g class="cy">
          <path id="lvl" d="M482 272.500h65M482 272.500l7.500 8 7.500-8"/><path id="base" d="M483 281h13" stroke-width="2"/>
          <use href="#lvl" x="250"/><use href="#base" x="250"/><use href="#lvl" x="446"/><use href="#base" x="446"/><use href="#lvl" x="-98" y="198"/><use href="#base" x="-98" y="198"/>
        </g>
        <path d="M785.500 443v25M785.500 493v26M747 480.500h26M798 480.500h26M773.500 468.500h24v24h-24z" fill="none" stroke="#c4000c"/>
        <path d="M46.500 518v50.500H97M42.500 563.500h9v9h-9z" fill="none" stroke="#ddd"/>
        <g class="ucs"><text x="49" y="514">Y</text><text x="101" y="567">X</text></g>
        <circle cx="1205" cy="185" r="34" fill="none" stroke="#555" stroke-width="7"/>
        <rect x="1189.500" y="169.500" width="31" height="31" fill="#b5b6b7" stroke="#888"/>
        <rect x="1195" y="175" width="20" height="20" fill="#a5a9b2"/>
        <g class="cube"><text x="1205" y="155">北</text><text x="1170" y="190">西</text><text x="1240" y="190">东</text><text x="1205" y="226">南</text></g>
        <text x="1205" y="193" class="top">上</text>
        <rect x="1181.500" y="239.500" width="47" height="17" rx="4" fill="#9295a2" stroke="#777987"/>
        <text x="1185" y="251" class="wcs">WCS</text><path d="M1215.500 245.500h8l-4 4z" fill="none" stroke="#b5b7c4"/>
        <text x="1109" y="565" class="mark">玩转设计</text>
      </svg>
      <div class="vscroll"><button class="up" aria-label="向上滚动"></button><i class="v1"></i><b class="thumb"></b><i class="v2"></i><button class="down" aria-label="向下滚动"></button></div>
      <div class="hscroll"><button class="left" aria-label="向左滚动"></button><i class="h1"></i><b class="thumb"></b><i class="h2"></i><button class="right" aria-label="向右滚动"></button></div>
      <i class="corner"></i>
    </section>
  </main>

  <section class="command">
    <div class="cmdside"><i class="hgrip"></i><button aria-label="关闭命令行"><svg viewBox="0 0 16 16"><path d="m4 4 8 8M12 4l-8 8" stroke="#eee" stroke-width="2"/></svg></button><button aria-label="自定义"><svg><use href="#wrench"/></svg></button></div>
    <div class="cmdmain">
      <div class="history"><p>命令: U</p><p>TRIM</p></div>
      <div class="prompt"><button class="pbtn" aria-label="最近使用的命令"><svg viewBox="0 0 16 14"><path d="M.500.500h15v13H.500z" fill="#e3e7ea" stroke="#8a949c"/><path d="m3 4 3 3-3 3M8 10h5" fill="none" stroke="#333"/></svg></button><button class="drop gray" aria-label="命令列表"></button><input type="text" aria-label="命令" placeholder="鍵入命令"></div>
    </div>
  </section>

  <div class="layouts">
    <div class="ltabs"><button class="ltab on">模型</button><button class="ltab">布局1</button><button class="ltab">布局2</button><button class="ltab plus" aria-label="新建布局">+</button></div>
    <div class="dimbox">DIMSCALE:&lt;1:1&gt; DIMSTY:&lt;小标注&gt; STYLE:&lt;Standard&gt;</div>
  </div>

  <footer class="status">
    <div class="grp coords">89888037, 57045029, 0</div>
    <div class="grp"><button class="model">模型</button></div>
    <div class="grp"><button class="n" aria-label="栅格"><svg><use href="#s-grid"/></svg></button><button class="n" aria-label="捕捉"><svg><use href="#s-dots"/></svg></button><button class="drop" aria-label="捕捉选项"></button></div>
    <div class="grp"><button class="n" aria-label="推断约束"><svg><use href="#s-infer"/></svg></button><button class="cell" aria-label="动态输入"><svg><use href="#s-dyn"/></svg></button><button class="cell" aria-label="正交"><svg><use href="#s-ortho"/></svg></button><button class="n" aria-label="极轴"><svg><use href="#s-polar"/></svg></button><button class="drop" aria-label="极轴选项"></button><button class="n" aria-label="等轴测"><svg><use href="#s-iso"/></svg></button><button class="drop" aria-label="等轴测选项"></button><button class="cell" aria-label="对象追踪"><svg><use href="#s-track"/></svg></button><button class="n" aria-label="对象捕捉"><svg><use href="#s-snap"/></svg></button><button class="drop" aria-label="捕捉设置"></button><button class="cell" aria-label="线宽"><svg><use href="#s-lw"/></svg></button><button class="cell" aria-label="透明度"><svg><use href="#s-tr"/></svg></button><button class="cell" aria-label="选择循环"><svg><use href="#s-cyc"/></svg></button><button class="cell" aria-label="三维捕捉"><svg><use href="#s-cubeg"/></svg></button><button class="drop" aria-label="三维捕捉选项"></button></div>
    <div class="grp"><button class="n" aria-label="动态 UCS"><svg><use href="#s-ucs"/></svg></button><button class="n" aria-label="过滤"><svg><use href="#s-cube"/></svg></button><button class="drop" aria-label="过滤选项"></button><button class="n" aria-label="小控件"><svg><use href="#s-giz"/></svg></button><button class="drop" aria-label="小控件选项"></button></div>
    <div class="grp"><button class="n" aria-label="注释可见性"><svg><use href="#s-annb"/></svg></button><button class="n" aria-label="自动缩放"><svg><use href="#s-anna"/></svg></button><button class="n" aria-label="注释比例"><svg><use href="#s-ann"/></svg></button><button class="scale">1:1 / 100%</button><button class="drop" aria-label="比例列表"></button></div>
    <div class="grp"><button class="n" aria-label="工作空间"><svg><use href="#s-gear"/></svg></button><button class="drop" aria-label="工作空间列表"></button><button class="cell" aria-label="注释监视器"><svg><use href="#s-plus"/></svg></button></div>
    <div class="grp"><button aria-label="单位"><svg><use href="#s-unit"/></svg></button><button class="units">小数</button><button class="drop" aria-label="单位列表"></button><button class="cell" aria-label="快捷特性"><svg><use href="#s-qp"/></svg></button></div>
    <div class="grp"><button class="n" aria-label="锁定界面"><svg><use href="#s-lock"/></svg></button><button class="drop" aria-label="锁定选项"></button><button class="cell" aria-label="隔离对象"><svg><use href="#s-isol"/></svg></button></div>
    <div class="grp"><button class="n" aria-label="硬件加速"><svg class="big"><use href="#s-hw"/></svg></button></div>
    <div class="grp"><button class="n" aria-label="脚本"><svg><use href="#s-py"/></svg></button></div>
    <div class="grp"><button class="n" aria-label="全屏显示"><svg><use href="#s-full"/></svg></button><button class="n" aria-label="自定义"><svg><use href="#s-menu"/></svg></button></div>
  </footer>
</div>
</body>
</html>
```
FILE: styles.css
```css
* { box-sizing: border-box; }
html, body { height: 100%; margin: 0; }
body {
  background: linear-gradient(90deg, #b3c8e0, #8dadd2 40%, #98b6d7 70%, #b9cee5);
  font: 12px/16px "Noto Sans", "Noto Sans CJK SC", sans-serif;
  color: #eee;
  overflow: hidden;
}
.defs { position: absolute; width: 0; height: 0; }
button, input, select { font: inherit; color: inherit; margin: 0; padding: 0; border: 0; background: none; border-radius: 0; }
button { display: flex; align-items: center; justify-content: center; flex: none; white-space: nowrap; }
button svg { width: 16px; height: 16px; flex: none; }
i, b { display: block; flex: none; }
p { margin: 0; }

.window { height: 100%; padding: 0 5px 6px; display: flex; flex-direction: column; }
.drop { width: 12px; }
.drop::after { content: ""; border: 3px solid transparent; border-top: 4px solid #eee; border-bottom: 0; }
.drop.dim::after { border-top-color: #999; }
.drop.gray { width: 12px; }
.drop.gray::after { border-top-color: #888; }

/* title bar */
.titlebar { position: relative; display: flex; height: 28px; flex: none; }
.logo { position: absolute; left: 0; top: 5px; z-index: 2; width: 41px; height: 40px; border: 1px solid #222; background: linear-gradient(#b5b5b5, #5c5c5c); }
.logo svg { width: 38px; height: 38px; }
.quick { display: flex; margin: 5px 0 0 41px; padding-left: 5px; background: linear-gradient(#8f8f8f, #6f6f6f); border-top: 1px solid #444; }
.q-btn { width: 24px; }
.custom { width: 15px; border-left: 1px solid #555; background: #8d8d8d; }
.custom svg { width: 14px; }
.title { flex: 1; margin: 0; padding: 4px 0 0 16px; text-align: center; font-size: 12px; line-height: 16px; font-weight: 400; color: #111; white-space: nowrap; text-shadow: 0 0 8px #dce8f5; }
.info { display: flex; margin-top: 5px; width: 446px; height: 22px; background: linear-gradient(#8f8f8f, #747474); border-top: 1px solid #444; }
.expand { width: 14px; }
.expand::after { content: ""; border: 4px solid transparent; border-left: 5px solid #fff; border-right: 0; }
.search { flex: 1; min-width: 0; padding: 0 4px; background: #707070; border: 1px solid #444; border-top: 0; font-style: italic; color: #ddd; }
.search::placeholder { color: #ccc; opacity: 1; }
.login { width: 102px; justify-content: flex-start; gap: 5px; padding-left: 5px; }
.help { margin-left: 8px; border-left: 1px solid #999; width: 32px; }
.winbtns { display: flex; height: 16px; margin: 0 0 0 22px; border: 1px solid #33465e; border-top: 0; border-radius: 0 0 5px 5px; overflow: hidden; }
.winbtns button { width: 28px; background: linear-gradient(#c7d5e5, #8499b2); border-right: 1px solid #4a5e78; }
.winbtns svg { height: 12px; }
.winbtns .close { width: 45px; border: 0; background: linear-gradient(#dc8f84, #b52c1c); }

/* menu bar */
.menubar { display: flex; height: 21px; flex: none; padding-left: 42px; border-top: 1px solid #444; background: linear-gradient(#aaa, #868686 30%, #5c5c5c); color: #fff; }
.menubar button { padding: 0 12px 0 13px; }
.menubar .docbtns { display: flex; margin-left: auto; padding-right: 2px; }
.menubar .docbtns button { width: 16px; padding: 0; }
.docbtns svg { width: 14px; height: 14px; }

/* file tabs */
.filetabs { display: flex; align-items: flex-end; height: 25px; flex: none; padding-left: 14px; background: #3a3a3a; }
.ftab { display: flex; width: 140px; height: 22px; padding: 0 18px; margin-right: -12px; background: linear-gradient(#5e5e5e, #474747); color: #a8a8a8; clip-path: polygon(0 100%, 5px 85%, 11px 12%, 15px 0, calc(100% - 13px) 0, calc(100% - 9px) 10%, calc(100% - 3px) 85%, 100% 100%); }
.ftab + .ftab { width: 135px; padding-left: 13px; }
.ftab .x { margin-left: auto; font-size: 10px; color: #333; }
.ftab.on { background: linear-gradient(#8c8c8c, #5b5b5b); color: #fff; }
.addtab { width: 25px; height: 18px; margin: 0 0 2px 14px; border-radius: 3px 3px 8px 4px; background: #555; color: #bbb; font-size: 18px; }

/* toolbars */
.bars { flex: none; display: grid; gap: 3px; padding: 4px 0; background: #5b5b5b; }
.row { display: flex; }
.bar { display: flex; height: 24px; border: 1px solid #393939; border-left: 0; margin-right: 1px; background: #595959; }
.bar button { width: 23px; }
.bar .drop { width: 13px; }
.bar.styles .sep + button { width: 25px; }
.grip { width: 9px; margin: 4px 0; background: repeating-linear-gradient(#222 0 1px, transparent 1px 2px) 3px 0 / 4px 100% no-repeat; }
.sep { width: 6px; background: linear-gradient(90deg, #111 1px, #ddd 1px) 2px 2px / 2px calc(100% - 4px) no-repeat; }
.combo { position: relative; display: flex; color: #111; border: 1px solid #fafafa; background: linear-gradient(#f4f4f4, #dcdcdc); }
.combo select { width: 100%; padding: 0 18px 0 7px; appearance: none; color: inherit; opacity: 1; }
.combo::after { content: ""; position: absolute; right: 3px; top: 9px; border: 4px solid transparent; border-top: 5px solid #000; border-bottom: 0; pointer-events: none; }
.over { position: absolute; left: 2px; top: 0; bottom: 0; display: flex; align-items: center; gap: 1px; pointer-events: none; }
.over svg { width: 16px; height: 16px; }
.swatch { width: 10px; height: 10px; border: 1px solid #000; background: #7c7c7c; }
.rule { height: 1px; background: #000; }
.combo-dark { width: 180px; background: #484848; border-color: #2c2c2c; color: #fff; }
.combo-dark select { padding-left: 20px; }
.combo-dark::after { border-top-color: #fff; }
.c-style { width: 118px; }
.c-style select { padding-left: 17px; }
.c-style.flush select { padding-left: 3px; }
.c-work { width: 174px; }
.c-layer { width: 300px; }
.c-layer select { padding-left: 85px; }
.serif { font-family: "Liberation Serif", serif; font-size: 12px; }
.c-color { width: 149px; }
.c-color .over { left: 5px; }
.c-color select { padding-left: 18px; }
.c-ltype { width: 159px; }
.c-ltype .rule { width: 60px; }
.c-ltype select { padding-left: 67px; }
.c-lw { width: 125px; }
.c-lw .rule { width: 35px; }
.c-lw select { padding-left: 42px; }
.c-plot { width: 120px; color: #888; background: #f1f1f1; }
.c-plot::after { border-top-color: #aaa; }

/* drawing area */
.work { display: flex; flex: 1; min-height: 0; padding-bottom: 2px; background: #5b5b5b; }
.draw { display: flex; flex-direction: column; width: 25px; margin-right: 4px; border: 1px solid #383838; border-width: 1px 1px 0 0; overflow: hidden; }
.draw button { height: 22px; }
.draw .mtext { height: 18px; font: bold 15px/16px "Noto Sans", sans-serif; }
.hgrip { height: 5px; margin: 1px 3px 2px; background: repeating-linear-gradient(90deg, #222 0 1px, transparent 1px 2px) 0 0 / 100% 4px no-repeat; }
.view { flex: 1; min-width: 0; display: grid; grid-template: minmax(0, 1fr) 18px / minmax(0, 1fr) 17px; }
.canvas { display: block; width: 100%; height: 100%; }
.canvas text { font-family: "Liberation Mono", "Noto Sans CJK SC", monospace; }
.canvas .vp { font: 12px "Noto Sans", "Noto Sans CJK SC", sans-serif; fill: #0c0c0c; }
.yel { fill: none; stroke: #d6d60c; }
.canvas .dim text { font-family: "Liberation Serif", serif; font-size: 11px; fill: #eded0c; text-anchor: middle; }
.mag { fill: none; stroke: #bd12bd; }
.gray { stroke: #777; }
.wht { stroke: #b4b4b4; }
.lab text { font-size: 10px; fill: #808080; }
.room text { font-size: 13px; font-weight: 300; fill: #808080; }
.cy { fill: #666; stroke: #08d5d5; stroke-width: 1.5; }
.canvas .ucs text { font: 300 18px "Noto Sans", sans-serif; fill: #ddd; }
.canvas .cube text, .canvas .top { font-family: "Noto Sans CJK SC", sans-serif; font-size: 12px; fill: #b5b5b5; text-anchor: middle; }
.canvas .top { font-size: 20px; font-weight: 300; fill: #444; }
.canvas .wcs { font-family: "Liberation Sans", sans-serif; font-size: 11px; fill: #444852; }
.canvas .mark { font: 34px "Noto Sans CJK SC", sans-serif; fill: #fff; }
.vscroll, .hscroll { display: flex; background: #eee; border: 0 solid #fff; }
.vscroll { flex-direction: column; border-left-width: 1px; }
.hscroll { border-top-width: 1px; }
.vscroll button { height: 16px; }
.hscroll button { width: 16px; }
.vscroll button::after, .hscroll button::after { content: ""; border: 4px solid transparent; }
.up::after { border-top: 0 !important; border-bottom-color: #333 !important; }
.down::after { border-bottom: 0 !important; border-top-color: #333 !important; }
.left::after { border-left: 0 !important; border-right-color: #333 !important; }
.right::after { border-right: 0 !important; border-left-color: #333 !important; }
.thumb { width: 15px; height: 15px; margin: 1px 0; border: 1px solid #8d8d8d; border-radius: 2px; background: linear-gradient(#f7f7f7, #c9c9c9); }
.v1 { flex: 225 1 0; }
.v2 { flex: 175 1 0; }
.h1 { flex: 263 1 0; }
.h2 { flex: 913 1 0; }
.corner { background: #eee; }

/* command line */
.command { display: flex; flex: none; height: 57px; }
.cmdside { width: 23px; display: flex; flex-direction: column; background: linear-gradient(#777, #333); }
.cmdside .hgrip { margin-top: 3px; background-image: repeating-linear-gradient(90deg, #aaa 0 1px, transparent 1px 3px); }
.cmdside button { height: 23px; }
.cmdmain { flex: 1; display: flex; flex-direction: column; }
.history { height: 34px; padding: 2px; background: #c8c8c8; border-bottom: 1px solid #888; color: #111; font: 12px/15px "Liberation Mono", "Noto Sans CJK SC", monospace; }
.prompt { flex: 1; display: flex; align-items: center; padding-left: 5px; background: #fff; border-bottom: 1px solid #777; }
.prompt input { flex: 1; padding-left: 5px; color: #333; }
.prompt input::placeholder { color: #999; opacity: 1; }

/* layout tabs */
.layouts { display: flex; justify-content: space-between; flex: none; height: 29px; background: #383838; }
.ltabs { display: flex; padding-left: 6px; }
.ltab { height: 18px; width: 60px; margin-right: -6px; padding: 3px 0 0; color: #aaa; background: linear-gradient(#4a4a4a, #6b6b6b); clip-path: polygon(0 0, 100% 0, calc(100% - 4px) 20%, calc(100% - 8px) 85%, calc(100% - 12px) 100%, 12px 100%, 8px 85%, 4px 20%); }
.ltab.on { color: #fff; font-weight: 700; background: linear-gradient(#666, #999); }
.ltab.plus { width: 24px; margin-left: 2px; padding: 0; font-size: 18px; clip-path: none; border-radius: 0 0 8px 4px; background: #505050; }
.dimbox { padding: 4px 6px; margin-top: 2px; height: 27px; border: 1px solid #808080; background: #4b4b4b; color: #fff; white-space: nowrap; }

/* status bar */
.status { display: flex; justify-content: flex-end; flex: none; gap: 1px; height: 28px; background: #383838; }
.grp { display: flex; border: 1px solid #7c7c7c; background: #4a4a4a; color: #fff; }
.grp button { width: 26px; }
.grp .n { width: 24px; }
.grp .cell { width: 25px; border-left: 1px solid #7c7c7c; }
.grp .drop { width: 15px; }
.grp .drop::after { border-width: 5px 4px 0; }
.coords { width: 150px; align-items: center; justify-content: flex-end; padding-right: 5px; white-space: nowrap; }
.grp .model { width: 28px; font-weight: 500; }
.grp .scale { width: 64px; }
.grp .units { width: 56px; justify-content: flex-start; padding-left: 3px; font-weight: 500; }
.grp svg.big { width: 18px; height: 18px; }
```
